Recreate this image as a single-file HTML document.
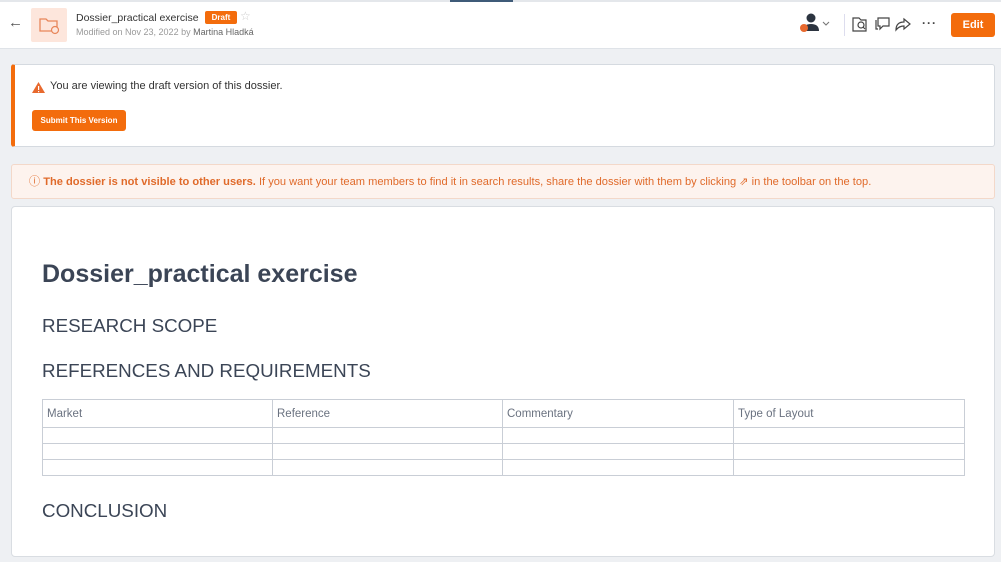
<!DOCTYPE html>
<html><head><meta charset="utf-8"><style>
*{box-sizing:border-box;margin:0;padding:0}
body{width:1001px;height:562px;background:#eef0f3;font-family:"Liberation Sans",sans-serif;position:relative;overflow:hidden;color:#3b4556}
.hdr{position:absolute;left:0;top:0;width:1001px;height:49px;background:#fff;border-bottom:1px solid #dfe3e8;border-top:2px solid #e4e7eb}
.a{position:absolute}
.box{position:absolute;left:11px;top:64px;width:984px;height:83px;background:#fff;border:1px solid #d5dae0;border-left:4px solid #f36c0c;border-radius:3px}
.alert{position:absolute;left:11px;top:164px;width:984px;height:35px;background:#fdf3ee;border:1px solid #f3d8c9;border-radius:3px;font-size:11.1px;color:#e06a2a;line-height:35px;padding-left:17px}
.card{position:absolute;left:11px;top:206px;width:984px;height:351px;background:#fff;border:1px solid #d9dde2;border-radius:4px}
h1{position:absolute;left:42px;top:260px;font-size:25px;font-weight:bold;color:#3b4556}
.h2{position:absolute;left:42px;font-size:18.8px;color:#3b4556}
table{position:absolute;left:42px;top:399px;width:923px;border-collapse:collapse}
td{border:1px solid #c9ced6;font-size:11.5px;color:#6a7280;padding:0 4px;height:16px}
tr:first-child td{height:28px}
</style></head><body>
<div class="hdr"></div>
<div class="a" style="left:450px;top:0;width:63px;height:2px;background:#3f5b78"></div>
<div class="a" style="left:8px;top:14px;font-size:15px;color:#555">←</div>
<div class="a" style="left:31px;top:8px;width:36px;height:34px;background:#fde6dc;border-radius:2px">
<svg width="36" height="34" viewBox="0 0 36 34"><path d="M9 11h6l2 2h9v10H9z" fill="none" stroke="#e8865a" stroke-width="1.3"/><circle cx="24" cy="22" r="3.5" fill="#fde6dc" stroke="#e8865a" stroke-width="1.2"/></svg></div>
<div class="a" style="left:76px;top:12px;font-size:10.5px;color:#333">Dossier_practical exercise</div>
<div class="a" style="left:205px;top:11px;width:32px;height:13px;background:#f36c0c;border-radius:2px;color:#fff;font-size:8px;font-weight:bold;text-align:center;line-height:13px">Draft</div>
<div class="a" style="left:240px;top:9px;font-size:12px;color:#ccc">☆</div>
<div class="a" style="left:76px;top:27px;font-size:9px;color:#999">Modified on Nov 23, 2022 by <span style="color:#666">Martina Hladká</span></div>
<svg class="a" style="left:798px;top:13px" width="40" height="22" viewBox="0 0 40 22"><circle cx="13" cy="5" r="4.5" fill="#2c3440"/><path d="M5 18q0-7 8-7t8 7z" fill="#2c3440"/><circle cx="6" cy="15" r="4" fill="#e8692e"/><path d="M25 9l3 3 3-3" fill="none" stroke="#777" stroke-width="1.1"/></svg>
<div class="a" style="left:844px;top:14px;width:1px;height:22px;background:#dde"></div>
<svg class="a" style="left:850px;top:14px" width="70" height="20" viewBox="0 0 70 20" fill="none" stroke="#444" stroke-width="1.2"><path d="M3 4h6l2 2h5v11H3z"/><circle cx="11" cy="11" r="3"/><path d="M13 13l2 2"/><path d="M28 4h11v8h-6l-3 3v-3h-2z"/><path d="M26 6v9h2"/><path d="M54 5l6 5-6 5v-3q-5 0-8 4 0-8 8-8z"/></svg>
<div class="a" style="left:922px;top:16px;font-size:12px;color:#444;letter-spacing:1px;font-weight:bold">···</div>
<div class="a" style="left:951px;top:13px;width:44px;height:24px;background:#f36c0c;border-radius:3px;color:#fff;font-size:11px;font-weight:bold;text-align:center;line-height:24px">Edit</div>
<div class="box">
<svg class="a" style="left:17px;top:17px" width="13" height="11" viewBox="0 0 13 11"><path d="M6.5 0L13 11H0z" fill="#e8692e"/><rect x="6" y="4" width="1.2" height="4" fill="#fff"/><rect x="6" y="9" width="1.2" height="1.2" fill="#fff"/></svg>
<div class="a" style="left:35px;top:15px;font-size:11px;color:#333">You are viewing the draft version of this dossier.</div>
<div class="a" style="left:17px;top:45px;width:94px;height:21px;background:#f36c0c;border-radius:3px;color:#fff;font-size:8px;font-weight:bold;text-align:center;line-height:21px">Submit This Version</div>
</div>
<div class="alert">ⓘ <b>The dossier is not visible to other users.</b> If you want your team members to find it in search results, share the dossier with them by clicking ⇗ in the toolbar on the top.</div>
<div class="card"></div>
<h1>Dossier_practical exercise</h1>
<div class="h2" style="top:315px">RESEARCH SCOPE</div>
<div class="h2" style="top:360px">REFERENCES AND REQUIREMENTS</div>
<table>
<tr><td style="width:230px">Market</td><td style="width:230px">Reference</td><td style="width:231px">Commentary</td><td>Type of Layout</td></tr>
<tr><td></td><td></td><td></td><td></td></tr>
<tr><td></td><td></td><td></td><td></td></tr>
<tr><td></td><td></td><td></td><td></td></tr>
</table>
<div class="h2" style="top:500px">CONCLUSION</div>
</body></html>
